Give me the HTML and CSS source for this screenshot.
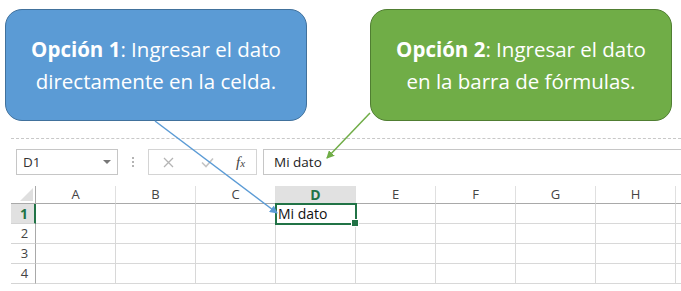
FILE: index.html
```html
<!DOCTYPE html>
<html lang="es">
<head>
<meta charset="utf-8">
<title>Ingresar datos</title>
<link rel="stylesheet" href="styles.css">
</head>
<body>
<div class="page">
  <div class="callouts">
    <div class="callout blue"><p><b>Opción 1</b>: Ingresar el dato<br>directamente en la celda.</p></div>
    <div class="callout green"><p><b>Opción 2</b>: Ingresar el dato<br>en la barra de fórmulas.</p></div>
  </div>
  <div class="ribbon-line"></div>
  <div class="formula-bar">
    <div class="name-box"><span>D1</span><span class="caret"></span></div>
    <div class="dots"><i></i><i></i><i></i></div>
    <div class="buttons">
      <svg class="ico x" width="11" height="11" viewBox="0 0 11 11"><path d="M1 1L10 10M10 1L1 10" stroke="#b4b4b4" stroke-width="1.3" fill="none"/></svg>
      <svg class="ico check" width="13" height="11" viewBox="0 0 13 11"><path d="M1 5.5L5 9.5L12 1.5" stroke="#c4c4c4" stroke-width="1.6" fill="none"/></svg>
      <span class="fx">f<span class="sub">x</span></span>
    </div>
    <div class="formula-input">Mi dato</div>
  </div>
  <div class="grid">
    <div class="corner"><svg width="13" height="13" viewBox="0 0 13 13"><path d="M13 0L13 13L0 13Z" fill="#dfdfdf"/></svg></div>
    <div class="ch">A</div><div class="ch">B</div><div class="ch">C</div><div class="ch sel">D</div><div class="ch">E</div><div class="ch">F</div><div class="ch">G</div><div class="ch">H</div><div class="ch"></div>

    <div class="rh sel">1</div><div class="c"></div><div class="c"></div><div class="c"></div><div class="c active">Mi dato<span class="handle"></span></div><div class="c"></div><div class="c"></div><div class="c"></div><div class="c"></div><div class="c"></div>
    <div class="rh">2</div><div class="c"></div><div class="c"></div><div class="c"></div><div class="c"></div><div class="c"></div><div class="c"></div><div class="c"></div><div class="c"></div><div class="c"></div>
    <div class="rh">3</div><div class="c"></div><div class="c"></div><div class="c"></div><div class="c"></div><div class="c"></div><div class="c"></div><div class="c"></div><div class="c"></div><div class="c"></div>
    <div class="rh">4</div><div class="c"></div><div class="c"></div><div class="c"></div><div class="c"></div><div class="c"></div><div class="c"></div><div class="c"></div><div class="c"></div><div class="c"></div>
  </div>
  <svg class="arrows" width="681" height="291" viewBox="0 0 681 291">
    <defs>
      <marker id="ab" markerWidth="8" markerHeight="8" refX="7" refY="4" orient="auto" markerUnits="userSpaceOnUse"><path d="M0 0L8 4L0 8Z" fill="#5b9bd5"/></marker>
      <marker id="ag" markerWidth="8" markerHeight="8" refX="7" refY="4" orient="auto" markerUnits="userSpaceOnUse"><path d="M0 0L8 4L0 8Z" fill="#70ad47"/></marker>
    </defs>
    <line x1="155" y1="121" x2="277" y2="213" stroke="#5b9bd5" stroke-width="1.5" marker-end="url(#ab)"/>
    <line x1="370" y1="113" x2="327" y2="158" stroke="#70ad47" stroke-width="1.5" marker-end="url(#ag)"/>
  </svg>
</div>
</body>
</html>
```
FILE: styles.css
```css
* { box-sizing: border-box; }
html, body { margin: 0; padding: 0; background: #fff; }
.page {
  position: relative;
  width: 681px;
  height: 291px;
  overflow: hidden;
  font-family: "Open Sans", "Liberation Sans", sans-serif;
}
.callouts {
  display: flex;
  gap: 63px;
  padding: 9px 0 0 5px;
}
.callout {
  width: 302px;
  height: 112px;
  border-radius: 17px;
  color: #fff;
  display: flex;
  align-items: center;
  justify-content: center;
  padding-bottom: 1px;
}
.callout p {
  margin: 0;
  font-size: 20.5px;
  line-height: 32px;
  text-align: center;
  white-space: nowrap;
}
.callout b { font-weight: 700; }
.blue { background: #5b9bd5; border: 1.5px solid #41719c; }
.green { background: #70ad47; border: 1.5px solid #507e32; }
.ribbon-line {
  margin: 17px 0 0 11px;
  border-top: 1px dashed #c8c8c8;
  height: 0;
}
.formula-bar {
  display: flex;
  align-items: center;
  height: 26px;
  margin-top: 10px;
}
.name-box {
  margin-left: 16px;
  width: 102px;
  height: 26px;
  border: 1px solid #c6c6c6;
  display: flex;
  align-items: center;
  justify-content: space-between;
  padding: 0 6px 0 6px;
  font-size: 13.5px;
  color: #333;
}
.caret {
  width: 0; height: 0;
  border-left: 4px solid transparent;
  border-right: 4px solid transparent;
  border-top: 4px solid #777;
}
.dots {
  width: 30px;
  display: flex;
  flex-direction: column;
  align-items: center;
  gap: 2px;
}
.dots i { width: 2px; height: 2px; background: #b4b4b4; display: block; }
.buttons {
  width: 109px;
  height: 26px;
  border: 1px solid #d4d4d4;
  display: flex;
  align-items: center;
  padding-left: 14px;
}
.ico.x { margin-right: 27px; }
.ico.check { margin-right: 22px; }
.fx {
  font-family: "Liberation Serif", serif;
  font-style: italic;
  font-size: 15px;
  color: #444;
}
.fx .sub { font-size: 11px; }
.formula-input {
  margin-left: 6px;
  flex: 1;
  height: 26px;
  border: 1px solid #c6c6c6;
  border-right: none;
  display: flex;
  align-items: center;
  padding-left: 10px;
  font-size: 13.5px;
  color: #222;
}
.grid {
  margin: 11px 0 0 11px;
  display: grid;
  grid-template-columns: 25px repeat(9, 80px);
  grid-template-rows: 18px repeat(4, 20px);
  font-size: 13px;
  color: #444;
}
.corner {
  border-bottom: 1px solid #a9a9a9;
  border-right: 1px solid #a9a9a9;
  display: flex;
  align-items: flex-end;
  justify-content: flex-end;
  padding: 0 2px 2px 0;
}
.ch {
  border-bottom: 1px solid #a9a9a9;
  border-right: 1px solid #e0e0e0;
  text-align: center;
  line-height: 17px;
}
.ch.sel {
  background: #e1e1e1;
  color: #217346;
  font-weight: 700;
  font-size: 14px;
  border-bottom-color: #217346;
}
.rh {
  border-right: 1px solid #a9a9a9;
  border-bottom: 1px solid #d4d4d4;
  text-align: center;
  line-height: 19px;
  padding-left: 3px;
}
.rh.sel {
  background: #e1e1e1;
  color: #217346;
  font-weight: 700;
  font-size: 14px;
  border-right: 2px solid #217346;
}
.c {
  border-right: 1px solid #d8d8d8;
  border-bottom: 1px solid #d8d8d8;
  position: relative;
}
.c.active {
  outline: 2px solid #217346;
  outline-offset: -1px;
  font-size: 14px;
  color: #111;
  line-height: 19px;
  padding-left: 2px;
  z-index: 1;
}
.handle {
  position: absolute;
  right: -4px;
  bottom: -4px;
  width: 6px;
  height: 6px;
  background: #217346;
  border: 1px solid #fff;
  box-sizing: content-box;
}
.arrows {
  position: absolute;
  left: 0;
  top: 0;
  pointer-events: none;
  z-index: 5;
}
```
